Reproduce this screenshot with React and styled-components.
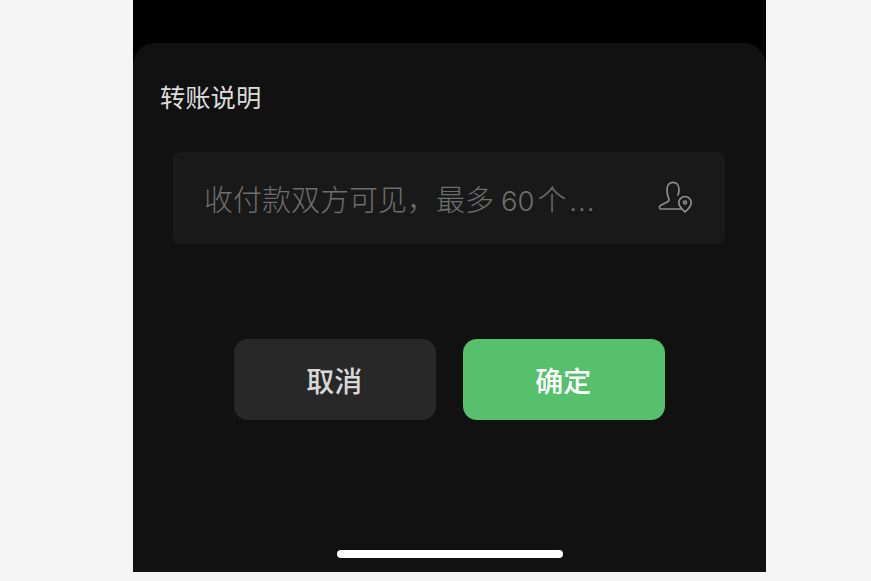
import React from "react";
import styled, { createGlobalStyle } from "styled-components";

const Global = createGlobalStyle`
  html, body { margin: 0; padding: 0; background: #f5f5f5; }
  body { font-family: "Noto Sans CJK SC", "Liberation Sans", sans-serif; }
`;
const Page = styled.div`
  width: 871px; height: 581px; background: #f5f5f5; overflow: hidden;
  padding-left: 133px; box-sizing: border-box;
`;
const Phone = styled.div`
  width: 633px; height: 572px; background: #000; padding-top: 43px; box-sizing: border-box;
  display: flex; flex-direction: column;
`;
const Sheet = styled.div`
  flex: 1; background: #111111; border-radius: 22px 22px 0 0;
  display: flex; flex-direction: column; padding: 35px 41px 14px 28px;
`;
const Title = styled.h2`
  margin: 0 0 0 -1px; font-size: 25.3px; line-height: 36px; font-weight: 400; color: #dcdcdc;
`;
const InputRow = styled.div`
  margin: 38px 0 0 12px; height: 92px; background: #191919; border-radius: 7px;
  display: flex; align-items: center; justify-content: space-between; padding: 0 33px 0 31px;
`;
const Placeholder = styled.span`
  font-size: 29px; line-height: 40px; color: #6e6e6e; white-space: nowrap; font-weight: 300;
  display: flex; align-items: baseline; padding-top: 3px;
`;
const Num = styled.span`
  font-family: "Inter", "Liberation Sans", sans-serif; font-size: 27.500px; font-weight: 300;
  margin: 0 3px 0 7px;
`;
const Dots = styled.span`
  font-family: "Liberation Sans", sans-serif; letter-spacing: 1.500px; margin-left: 3px; font-size: 26px;
`;
const Actions = styled.div`
  margin: 95px 0 0 73px; display: flex; gap: 27.500px;
`;
const Btn = styled.div`
  width: 201.500px; height: 81px; border-radius: 14px;
  display: flex; align-items: center; justify-content: center;
  font-size: 28px; font-weight: 500; padding-right: 1px; box-sizing: border-box;
  background: ${p => (p.$primary ? "#56c06c" : "#282828")};
  color: ${p => (p.$primary ? "#ffffff" : "#d8d8d8")};
`;
const Home = styled.div`
  margin: auto 0 0 176px;
  width: 226px; height: 8px; border-radius: 4px; background: #fff;
`;
const Icon = () => (
  <svg width="34" height="34" viewBox="0 0 34 34" fill="none" stroke="#8c8c8c" strokeWidth="1.700" strokeLinejoin="round" strokeLinecap="round">
    <path d="M24 28H3.200c-1.600 0-2.300-1.800-1.200-3 2-2 6-3 8-4.500 1.200-1 1.300-2 .6-3.500C9.500 15 9 12 9 8.500 9 4 11.500 1.300 15 1.300s6 2.700 6 7.200c0 2-.3 4-1 5.500" />
    <path d="M27 31c-3-2.800-6.200-5.500-6.200-9.300a6.200 6.200 0 0 1 12.400 0c0 3.800-3.200 6.500-6.200 9.300z" />
    <circle cx="27" cy="21.500" r="1.500" />
  </svg>
);

export default function App() {
  return (
    <Page>
      <Global />
      <Phone>
        <Sheet>
          <Title>转账说明</Title>
          <InputRow>
            <Placeholder>收付款双方可见，最多<Num>60</Num>个<Dots>...</Dots></Placeholder>
            <Icon />
          </InputRow>
          <Actions>
            <Btn>取消</Btn>
            <Btn $primary>确定</Btn>
          </Actions>
          <Home />
        </Sheet>
      </Phone>
    </Page>
  );
}
